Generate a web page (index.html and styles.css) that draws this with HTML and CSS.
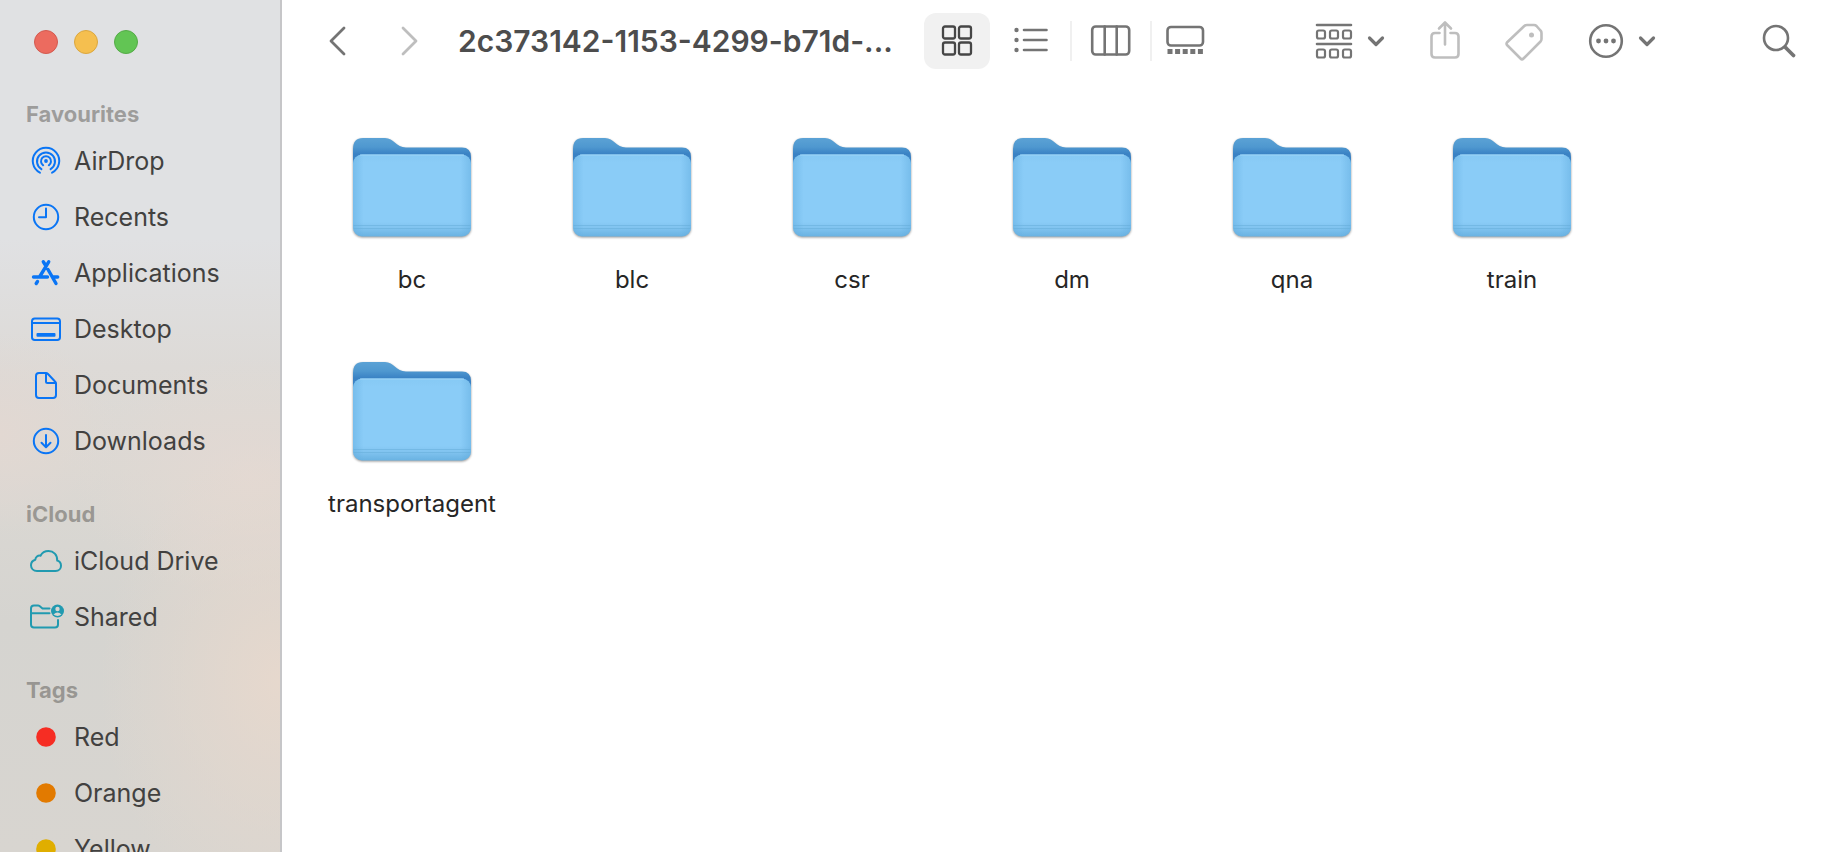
FILE: index.html
```html
<!DOCTYPE html>
<html lang="en-GB">
<head>
<meta charset="utf-8">
<title>Finder</title>
<link rel="stylesheet" href="styles.css">
</head>
<body>
<svg class="defs" aria-hidden="true">
  <defs>
    <linearGradient id="folder-back" x1="0" y1="0" x2="0" y2="1">
      <stop offset="0" stop-color="#5ba2d5"/>
      <stop offset="0.1" stop-color="#4f98d0"/>
      <stop offset="0.18" stop-color="#3a82c4"/>
      <stop offset="1" stop-color="#3a82c4"/>
    </linearGradient>
    <linearGradient id="folder-front" x1="0" y1="0" x2="0" y2="1">
      <stop offset="0" stop-color="#86c9f4"/>
      <stop offset="0.1" stop-color="#8accf7"/>
      <stop offset="0.82" stop-color="#8accf7"/>
      <stop offset="0.9" stop-color="#80c3ef"/>
      <stop offset="1" stop-color="#69b2e2"/>
    </linearGradient>
    <linearGradient id="folder-edge" x1="0" y1="0" x2="1" y2="0">
      <stop offset="0" stop-color="#5faadd" stop-opacity="0.45"/>
      <stop offset="0.09" stop-color="#5faadd" stop-opacity="0"/>
      <stop offset="0.91" stop-color="#5faadd" stop-opacity="0"/>
      <stop offset="1" stop-color="#5faadd" stop-opacity="0.45"/>
    </linearGradient>
    <symbol id="folder" viewBox="0 0 124 104">
      <path d="M3 12Q3 1 13 1H35C44 1 46 10.500 56 10.500H112Q121 10.500 121 20V90H3Z" fill="url(#folder-back)"/>
      <rect x="3" y="17.500" width="118" height="82" rx="9" fill="url(#folder-front)"/>
      <rect x="3" y="17.500" width="118" height="82" rx="9" fill="url(#folder-edge)"/>
      <path d="M10 18H114" stroke="#a0d6f7" stroke-width="1"/>
      <path d="M3.500 88.500H120.500M3.500 91.500H120.500" stroke="#64abd8" stroke-opacity="0.5" stroke-width="1"/>
    </symbol>
  </defs>
</svg>
<div class="window">
  <aside class="sidebar">
    <div class="window-controls">
      <button class="light close" aria-label="Close"></button>
      <button class="light minimise" aria-label="Minimise"></button>
      <button class="light zoom" aria-label="Zoom"></button>
    </div>
    <nav class="places">
      <section>
        <h2>Favourites</h2>
        <a href="#airdrop"><svg class="icon blue" viewBox="0 0 36 36"><circle cx="18" cy="18" r="1.900" fill="currentColor" stroke="none"/><path d="M15.200 22.300A5 5 0 1 1 20.800 22.300M13.400 26.200A9 9 0 1 1 22.600 26.200M11.900 29.700A13.200 13.200 0 1 1 24.100 29.700" fill="none"/></svg>AirDrop</a>
        <a href="#recents"><svg class="icon blue" viewBox="0 0 36 36"><circle cx="18" cy="18" r="12.200"/><path d="M18 9.500V18.300H11"/></svg>Recents</a>
        <a href="#applications"><svg class="icon blue" viewBox="0 0 36 36"><path d="M15.300 6.800L17.700 10.500M20.700 6.800L11.500 22M20 14.500L28 28.500M5.500 22H19.500M25.500 22H29.700M9.500 26.500L8.200 28.500" stroke-width="3.400"/></svg>Applications</a>
        <a href="#desktop"><svg class="icon blue" viewBox="0 0 36 36"><rect x="4" y="7.500" width="28" height="21.500" rx="2.800"/><path d="M4 12H32"/><rect x="8.500" y="22" width="19" height="3.800" rx="1" fill="currentColor" stroke="none"/></svg>Desktop</a>
        <a href="#documents"><svg class="icon blue" viewBox="0 0 36 36"><path d="M18 6H11Q8 6 8 9V28Q8 31 11 31H25Q28 31 28 28V16.500Q28 15.500 27 14.500L20 7Q19 6 18 6ZM18 6V14.500Q18 16 19.500 16H28"/></svg>Documents</a>
        <a href="#downloads"><svg class="icon blue" viewBox="0 0 36 36"><circle cx="18" cy="18" r="12.200"/><path d="M18 12V24M13.500 19.700L18 24.200L22.500 19.700"/></svg>Downloads</a>
      </section>
      <section>
        <h2>iCloud</h2>
        <a href="#icloud-drive"><svg class="icon teal" viewBox="0 0 36 36"><path d="M9 28H27.500C31 28 33 25.500 33 22.700C33 20 31.500 18.200 29.200 17.500C29.500 12 25.500 8 20.500 8C16.500 8 13.800 10.200 12.500 12.700C9.800 12.200 7.500 14 7.300 16.800C4.500 17.600 3 19.700 3 22.300C3 25.500 5.500 28 9 28Z"/></svg>iCloud Drive</a>
        <a href="#shared"><svg class="icon teal" viewBox="0 0 36 36"><path d="M21.500 9.500H14.500L11.500 7Q11 6.600 10 6.600H6Q3 6.600 3 9.500V25.500Q3 28.500 6 28.500H27Q30 28.500 30 25.500V21M3 14.300H21.500"/><circle cx="29.500" cy="12" r="6.500" fill="currentColor" stroke="none"/><circle cx="29.500" cy="10" r="2.200" fill="#d8d6d2" stroke="none"/><path d="M25.500 15.500Q29.500 11.500 33.500 15.500Q29.500 18.300 25.500 15.500Z" fill="#d8d6d2" stroke="none"/></svg>Shared</a>
      </section>
      <section>
        <h2>Tags</h2>
        <a href="#red"><svg class="icon" viewBox="0 0 36 36"><circle cx="18" cy="18" r="9.800" fill="#f62d23"/></svg>Red</a>
        <a href="#orange"><svg class="icon" viewBox="0 0 36 36"><circle cx="18" cy="18" r="9.800" fill="#e27a00"/></svg>Orange</a>
        <a href="#yellow"><svg class="icon" viewBox="0 0 36 36"><circle cx="18" cy="18" r="9.800" fill="#e0ae00"/></svg>Yellow</a>
      </section>
    </nav>
  </aside>
  <main class="content">
    <header class="toolbar">
      <div class="history">
        <button aria-label="Back"><svg width="20" height="32" viewBox="0 0 20 32"><path d="M17 3L4 16L17 29" stroke-width="2.800"/></svg></button>
        <button class="dim" aria-label="Forward" disabled><svg width="20" height="32" viewBox="0 0 20 32"><path d="M3 3L16 16L3 29" stroke-width="2.800"/></svg></button>
      </div>
      <h1>2c373142-1153-4299-b71d-...</h1>
      <div class="views">
        <button class="selected" aria-label="Icons"><svg width="34" height="34" viewBox="0 0 34 34"><g stroke-width="2.300"><rect x="3" y="2.500" width="12" height="12" rx="2"/><rect x="19" y="2.500" width="12" height="12" rx="2"/><rect x="3" y="18.500" width="12" height="12" rx="2"/><rect x="19" y="18.500" width="12" height="12" rx="2"/></g></svg></button>
        <button aria-label="List"><svg width="36" height="34" viewBox="0 0 36 34"><g fill="currentColor" stroke="none"><circle cx="3.500" cy="6" r="2.200"/><circle cx="3.500" cy="16" r="2.200"/><circle cx="3.500" cy="26" r="2.200"/></g><path d="M11 6H33.500M11 16H33.500M11 26H33.500"/></svg></button>
        <button aria-label="Columns"><svg width="40" height="34" viewBox="0 0 40 34"><rect x="1.200" y="2.500" width="37" height="28" rx="3.500"/><path d="M13.700 2.500V30.500M25.700 2.500V30.500"/></svg></button>
        <button aria-label="Gallery"><svg width="40" height="34" viewBox="0 0 40 34"><rect x="1.500" y="3" width="35.500" height="18.500" rx="3.500"/><path d="M1.500 27.500H37" stroke-width="5" stroke-dasharray="5 2.600" stroke-linecap="butt"/></svg></button>
      </div>
      <div class="actions">
        <button class="menu" aria-label="Group"><svg width="38" height="38" viewBox="0 0 38 38"><path d="M2 3H36M2 22H36"/><g stroke-width="2.200"><rect x="2" y="8.500" width="8" height="8" rx="1.800"/><rect x="15" y="8.500" width="8" height="8" rx="1.800"/><rect x="28" y="8.500" width="8" height="8" rx="1.800"/><rect x="2" y="27.500" width="8" height="8" rx="1.800"/><rect x="15" y="27.500" width="8" height="8" rx="1.800"/><rect x="28" y="27.500" width="8" height="8" rx="1.800"/></g></svg><svg width="18" height="16" viewBox="0 0 18 16"><path d="M2.500 5L9 11.500L15.500 5" stroke-width="3.200"/></svg></button>
        <button class="dim" aria-label="Share" disabled><svg width="30" height="42" viewBox="0 0 30 42"><path d="M9.500 13H5Q1.500 13 1.500 16.500V34Q1.500 37.500 5 37.500H25Q28.500 37.500 28.500 34V16.500Q28.500 13 25 13H20.500M15 24.500V3M9 8.500L15 2.500L21 8.500"/></svg></button>
        <button class="dim" aria-label="Tags" disabled><svg width="38" height="42" viewBox="0 0 38 42"><path d="M22 5H29Q30.500 5 31.500 6L35.500 10.500Q36.500 11.500 36.500 13V19Q36.500 20.500 35.500 21.500L18.500 38.500Q17 40 15.500 38.500L2 25Q1 23.500 2.200 22.200L19 6.200Q20.300 5 22 5Z"/><circle cx="26.500" cy="15" r="2.500" fill="currentColor" stroke="none"/></svg></button>
        <button class="menu" aria-label="More"><svg width="36" height="36" viewBox="0 0 36 36"><circle cx="18" cy="18" r="15.800"/><g fill="currentColor" stroke="none"><circle cx="10.500" cy="18" r="2.400"/><circle cx="18" cy="18" r="2.400"/><circle cx="25.500" cy="18" r="2.400"/></g></svg><svg width="18" height="16" viewBox="0 0 18 16"><path d="M2.500 5L9 11.500L15.500 5" stroke-width="3.200"/></svg></button>
      </div>
      <button class="search" aria-label="Search"><svg width="34" height="34" viewBox="0 0 34 34"><circle cx="14" cy="14" r="12"/><path d="M23.500 23.500L31.500 31.500" stroke-width="3.800"/></svg></button>
    </header>
    <ul class="files">
      <li><svg class="folder"><use href="#folder"/></svg><span>bc</span></li>
      <li><svg class="folder"><use href="#folder"/></svg><span>blc</span></li>
      <li><svg class="folder"><use href="#folder"/></svg><span>csr</span></li>
      <li><svg class="folder"><use href="#folder"/></svg><span>dm</span></li>
      <li><svg class="folder"><use href="#folder"/></svg><span>qna</span></li>
      <li><svg class="folder"><use href="#folder"/></svg><span>train</span></li>
      <li><svg class="folder"><use href="#folder"/></svg><span>transportagent</span></li>
    </ul>
  </main>
</div>
</body>
</html>
```
FILE: styles.css
```css
* {
  box-sizing: border-box;
}

body {
  margin: 0;
  background: #fff;
  color: #262626;
  font-family: Inter, "Liberation Sans", sans-serif;
}

.defs {
  display: block;
  width: 0;
  height: 0;
}

.window {
  display: flex;
  height: 100vh;
  overflow: hidden;
}

.sidebar {
  flex: 0 0 282px;
  overflow: hidden;
  border-right: 2px solid #c6c6c8;
  background:
    radial-gradient(ellipse 180px 240px at 100% 80%, #e6d8cd 0%, rgba(230, 216, 205, 0) 100%),
    radial-gradient(ellipse 180px 120px at 90% 56%, #e3d9d3 0%, rgba(227, 217, 211, 0) 100%),
    radial-gradient(ellipse 120px 100px at 0% 51%, #e2d8d2 0%, rgba(226, 216, 210, 0) 100%),
    linear-gradient(#e0e1e3 0%, #e0e1e3 28%, #dddad7 43%, #dbd8d3 55%, #d5d4d0 73%, #d8d5d0 100%);
}

.window-controls {
  display: flex;
  align-items: center;
  gap: 16px;
  height: 84px;
  padding-left: 34px;
}

.light {
  width: 24px;
  height: 24px;
  padding: 0;
  border: 1px solid;
  border-radius: 50%;
}

.close {
  border-color: #d35a50;
  background: #ec6b5f;
}

.minimise {
  border-color: #dba73f;
  background: #f5bf4f;
}

.zoom {
  border-color: #55ab48;
  background: #62c554;
}

.places {
  display: flex;
  flex-direction: column;
  gap: 26px;
  padding-top: 11px;
}

.places h2 {
  margin: 0;
  padding-left: 26px;
  color: rgba(90, 88, 84, 0.5);
  font-size: 22px;
  font-weight: 700;
  line-height: 38px;
}

.places a {
  display: flex;
  align-items: center;
  gap: 10px;
  height: 56px;
  padding-left: 28px;
  color: #424140;
  font-size: 25px;
  text-decoration: none;
}

svg {
  flex: none;
  overflow: visible;
}

.icon {
  width: 36px;
  height: 36px;
  fill: none;
  stroke: currentColor;
  stroke-width: 2;
  stroke-linecap: round;
  stroke-linejoin: round;
}

.icon:not(.blue):not(.teal) {
  stroke: none;
}

.blue {
  color: #0a75f5;
}

.teal {
  color: #219ab0;
}

.content {
  flex: 1;
  min-width: 0;
}

.toolbar {
  display: flex;
  align-items: center;
  height: 82px;
  padding: 0 28px 0 45px;
}

.toolbar button {
  display: flex;
  align-items: center;
  justify-content: center;
  padding: 0;
  border: 0;
  background: none;
  color: #747474;
}

.toolbar svg {
  fill: none;
  stroke: currentColor;
  stroke-width: 2.6;
  stroke-linecap: round;
  stroke-linejoin: round;
}

.toolbar .dim {
  color: #bebebe;
}

.history {
  display: flex;
  gap: 53px;
}

.toolbar h1 {
  flex: 0 0 466px;
  margin: 0 0 0 38px;
  color: #4d4d4d;
  font-size: 30px;
  font-weight: 600;
  line-height: 40px;
  white-space: nowrap;
}

.views {
  display: flex;
  align-items: center;
}

.toolbar .views button {
  width: 80px;
  height: 40px;
  border-left: 2px solid #f0f0f0;
}

.toolbar .views .selected {
  width: 66px;
  height: 56px;
  border: 0;
  border-radius: 12px;
  background: #f1f1f1;
  color: #464646;
}

.toolbar .views .selected + button {
  border-left-color: transparent;
}

.toolbar .views button:last-child {
  width: 70px;
}

.actions {
  display: flex;
  align-items: center;
  gap: 45px;
  margin-left: 95px;
}

.toolbar .menu {
  gap: 14px;
}

.toolbar .search {
  margin-left: auto;
}

.files {
  display: grid;
  grid-template-columns: repeat(auto-fill, 220px);
  grid-auto-rows: 224px;
  margin: 0;
  padding: 55px 20px 0;
  list-style: none;
}

.files li {
  display: flex;
  flex-direction: column;
  align-items: center;
  gap: 24px;
  font-size: 24px;
  line-height: 30px;
}

.folder {
  width: 124px;
  height: 104px;
  filter: drop-shadow(0 1px 1px rgba(0, 0, 0, 0.4));
}
```
